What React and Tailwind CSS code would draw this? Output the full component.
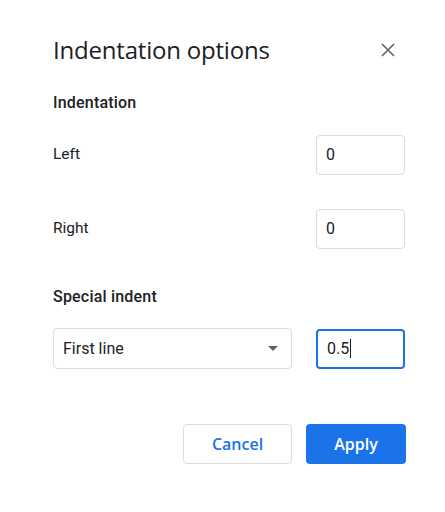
import React from "react";

function Field({ value, focused }) {
  return (
    <div
      className={
        "w-[89px] h-[40px] rounded-[4px] flex items-center pl-[9px] text-[16px] text-[#202124] bg-white " +
        (focused ? "border-2 border-[#1a73e8] pl-[8px]" : "border border-[#dadce0]")
      }
    >
      <span>{value}</span>
      {focused && <span className="w-px h-[19px] bg-[#202124] ml-px" />}
    </div>
  );
}

const sans = { fontFamily: "'Open Sans', Roboto, sans-serif" };

export default function App() {
  return (
    <div
      className="w-[445px] h-[512px] bg-white pl-[53px] pr-[40px] flex flex-col text-[#202124]"
      style={{ fontFamily: "Roboto, 'Liberation Sans', sans-serif" }}
    >
      <div className="flex items-center justify-between mt-[34px] h-[32px]">
        <h1 className="text-[24px] leading-[32px] font-normal tracking-[-0.2px]" style={sans}>
          Indentation options
        </h1>
        <button className="w-6 h-6 mr-[5px] flex items-center justify-center text-[#5f6368]">
          <svg width="14" height="14" viewBox="0 0 14 14">
            <path d="M1 1 L13 13 M13 1 L1 13" stroke="currentColor" strokeWidth="1.6" />
          </svg>
        </button>
      </div>

      <div className="mt-[27px] text-[16px] leading-[20px] font-medium tracking-[0.2px]">Indentation</div>

      <div className="mt-[22px] flex items-center justify-between">
        <span className="text-[15.5px]">Left</span>
        <Field value="0" />
      </div>

      <div className="mt-[34px] flex items-center justify-between">
        <span className="text-[15.5px]">Right</span>
        <Field value="0" />
      </div>

      <div className="mt-[38px] text-[16px] leading-[20px] font-medium tracking-[0.2px]">Special indent</div>

      <div className="mt-[21px] flex items-center justify-between">
        <div className="w-[239px] h-[41px] rounded-[4px] border border-[#dadce0] flex items-center justify-between pl-[9px] pr-[13px] text-[16px]">
          <span>First line</span>
          <svg width="10" height="5" viewBox="0 0 10 5" className="text-[#5f6368]">
            <path d="M0 0 L10 0 L5 5 Z" fill="currentColor" />
          </svg>
        </div>
        <Field value="0.5" focused />
      </div>

      <div className="mt-[55px] flex justify-end gap-[14px] -mr-px" style={sans}>
        <button className="w-[109px] h-[40px] rounded-[4px] border border-[#dadce0] text-[#1a73e8] text-[16px] font-semibold bg-white">
          Cancel
        </button>
        <button className="w-[100px] h-[40px] rounded-[4px] bg-[#1a73e8] text-white text-[16px] font-semibold">
          Apply
        </button>
      </div>
    </div>
  );
}
